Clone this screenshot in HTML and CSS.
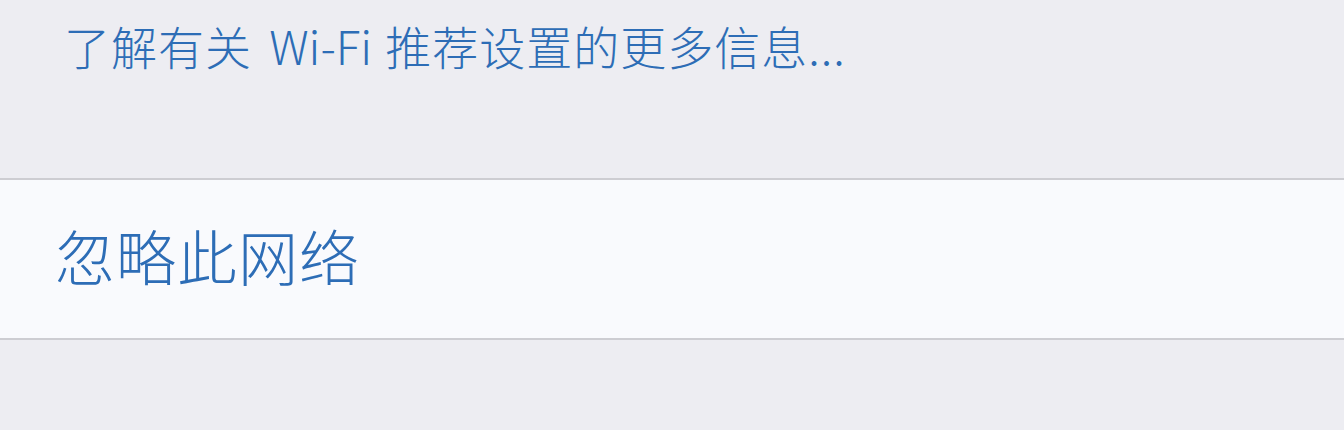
FILE: index.html
```html
<!DOCTYPE html>
<html lang="zh-CN">

<head>
    <meta charset="UTF-8">
    <meta name="viewport" content="width=device-width, initial-scale=1.0">
    <title>Wi-Fi</title>
    <link rel="stylesheet" href="styles.css">
</head>

<body>
    <div class="settings">
        <div class="group-footer">
            <a class="footer-link" href="#">了解有关 <span class="latin">Wi-Fi</span> 推荐设置的更多信息...</a>
        </div>
        <div class="group">
            <button class="row-action">忽略此网络</button>
        </div>
    </div>
</body>

</html>
```

FILE: styles.css
```css
body {
    margin: 0;
    padding: 0;
    background-color: #ededf2;
    font-family: "Noto Sans CJK SC", "Noto Sans", sans-serif;
    height: 430px;
    overflow: hidden;
}

.settings {
    display: flex;
    flex-direction: column;
}

.group-footer {
    height: 178px;
    padding: 12px 0 0 64px;
    box-sizing: border-box;
}

.footer-link {
    color: #2d6db6;
    font-size: 46px;
    font-weight: 300;
    line-height: 66px;
    letter-spacing: 1px;
    text-decoration: none;
}

.footer-link .latin {
    letter-spacing: 0;
    margin: 0 2px 0 6px;
}

.group {
    background: #f9fafd;
    border-top: 2px solid #cdcdd2;
    border-bottom: 2px solid #cdcdd2;
    height: 162px;
    box-sizing: border-box;
    display: flex;
    align-items: center;
}

.row-action {
    border: none;
    background: none;
    padding: 0 0 8px 55px;
    margin: 0;
    font-family: inherit;
    color: #2d6db6;
    font-size: 60px;
    font-weight: 300;
    line-height: 80px;
    letter-spacing: 1px;
    cursor: pointer;
}
```
